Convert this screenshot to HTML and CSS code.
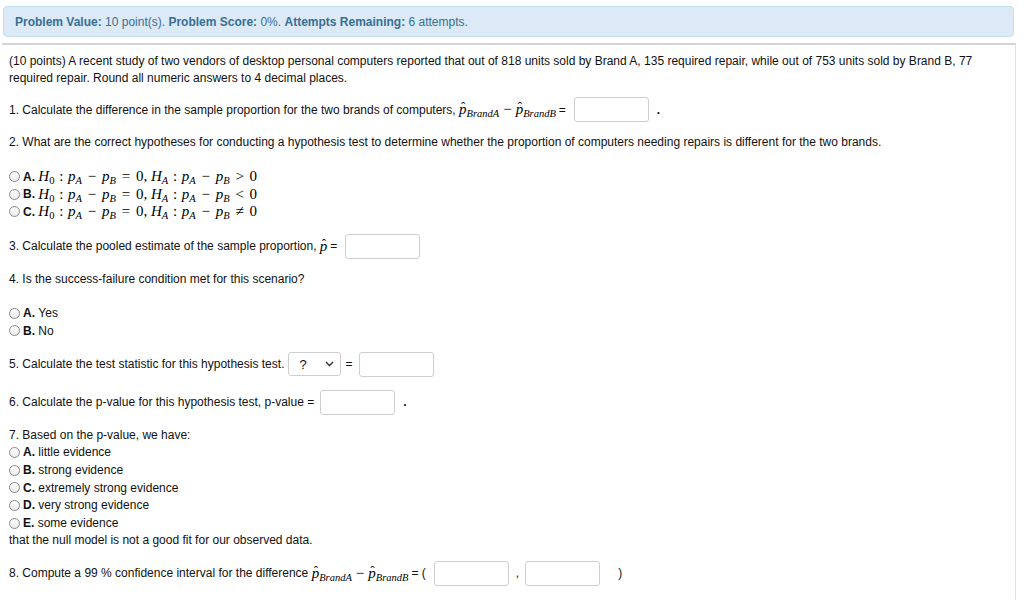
FILE: index.html
```html
<!DOCTYPE html>
<html lang="en">
<head>
<meta charset="utf-8">
<title>Problem</title>
<link rel="stylesheet" href="styles.css">
</head>
<body>
<div class="page">
  <div class="alert">
    <span class="alert-text"><b>Problem Value:</b> 10 point(s). <b>Problem Score:</b> 0%. <b>Attempts Remaining:</b> 6 attempts.</span>
  </div>
  <div class="rule"></div>
  <div class="content">
    <p class="intro">(10 points) A recent study of two vendors of desktop personal computers reported that out of 818 units sold by Brand A, 135 required repair, while out of 753 units sold by Brand B, 77 required repair. Round all numeric answers to 4 decimal places.</p>

    <div class="row m11">1. Calculate the difference in the sample proportion for the two brands of computers,&nbsp;<span class="math"><span class="hat">p</span><sub>BrandA</sub><span class="op">−</span><span class="hat">p</span><sub>BrandB</sub></span><span class="eq">=</span><span class="field"></span><span class="dot">.</span></div>

    <div class="line m12">2. What are the correct hypotheses for conducting a hypothesis test to determine whether the proportion of computers needing repairs is different for the two brands.</div>
    <div class="opts m17">
      <div class="opt"><span class="radio"></span><b>A.</b>&nbsp;<span class="math hyp"><i>H</i><sub class="n">0</sub> <span class="sp">:</span> <i>p</i><sub>A</sub> <span class="op">−</span> <i>p</i><sub>B</sub> <span class="op">=</span> 0, <i>H</i><sub>A</sub> <span class="sp">:</span> <i>p</i><sub>A</sub> <span class="op">−</span> <i>p</i><sub>B</sub> <span class="op">&gt;</span> 0</span></div>
      <div class="opt"><span class="radio"></span><b>B.</b>&nbsp;<span class="math hyp"><i>H</i><sub class="n">0</sub> <span class="sp">:</span> <i>p</i><sub>A</sub> <span class="op">−</span> <i>p</i><sub>B</sub> <span class="op">=</span> 0, <i>H</i><sub>A</sub> <span class="sp">:</span> <i>p</i><sub>A</sub> <span class="op">−</span> <i>p</i><sub>B</sub> <span class="op">&lt;</span> 0</span></div>
      <div class="opt"><span class="radio"></span><b>C.</b>&nbsp;<span class="math hyp"><i>H</i><sub class="n">0</sub> <span class="sp">:</span> <i>p</i><sub>A</sub> <span class="op">−</span> <i>p</i><sub>B</sub> <span class="op">=</span> 0, <i>H</i><sub>A</sub> <span class="sp">:</span> <i>p</i><sub>A</sub> <span class="op">−</span> <i>p</i><sub>B</sub> <span class="op">≠</span> 0</span></div>
    </div>

    <div class="row m13">3. Calculate the pooled estimate of the sample proportion,&nbsp;<span class="math"><span class="hat">p</span></span><span class="eq">=</span><span class="field"></span></div>

    <div class="line m12">4. Is the success-failure condition met for this scenario?</div>
    <div class="opts m17">
      <div class="opt"><span class="radio"></span><b>A.</b>&nbsp;Yes</div>
      <div class="opt"><span class="radio"></span><b>B.</b>&nbsp;No</div>
    </div>

    <div class="row m12">5. Calculate the test statistic for this hypothesis test.<span class="select"><span>?</span><svg width="9" height="6" viewBox="0 0 9 6"><path d="M1 1l3.5 3.5L8 1" fill="none" stroke="#333" stroke-width="1.4"/></svg></span><span class="eq eq-sel">=</span><span class="field"></span></div>

    <div class="row m13">6. Calculate the p-value for this hypothesis test, p-value =<span class="field gap"></span><span class="dot">.</span></div>

    <div class="line m12">7. Based on the p-value, we have:</div>
    <div class="opts tall">
      <div class="opt"><span class="radio"></span><b>A.</b>&nbsp;little evidence</div>
      <div class="opt"><span class="radio"></span><b>B.</b>&nbsp;strong evidence</div>
      <div class="opt"><span class="radio"></span><b>C.</b>&nbsp;extremely strong evidence</div>
      <div class="opt"><span class="radio"></span><b>D.</b>&nbsp;very strong evidence</div>
      <div class="opt"><span class="radio"></span><b>E.</b>&nbsp;some evidence</div>
    </div>
    <div class="line">that the null model is not a good fit for our observed data.</div>

    <div class="row m12">8. Compute a 99 % confidence interval for the difference&nbsp;<span class="math"><span class="hat">p</span><sub>BrandA</sub><span class="op">−</span><span class="hat">p</span><sub>BrandB</sub></span><span class="eq">= (</span><span class="field"></span><span class="comma">,</span><span class="field"></span><span class="paren">)</span></div>
  </div>
</div>
</body>
</html>
```

FILE: styles.css
```css
html, body {
  margin: 0;
  padding: 0;
  background: #fff;
}

body {
  font-family: "Liberation Sans", Arial, Helvetica, sans-serif;
  font-size: 12px;
  color: #111;
}

.page {
  width: 1016px;
  height: 600px;
}

.alert {
  margin: 6px 0 0 3px;
  width: 1011px;
  height: 31px;
  box-sizing: border-box;
  background: #dbeaf6;
  border: 1px solid #c6e0ee;
  border-radius: 4px;
  color: #3a6e92;
  padding: 1px 11px 0;
  display: flex;
  align-items: center;
}

.alert-text {
  line-height: 1;
  white-space: nowrap;
}

.rule {
  margin: 6px 0 0 2px;
  height: 2px;
  width: 1014px;
  background: #d4d4d4;
}

.content {
  border-right: 1px solid #e2e2e2;
  padding: 0 0 0 9px;
  height: 555px;
  box-sizing: border-box;
}

.intro {
  margin: 0;
  padding-top: 8px;
  line-height: 17px;
  width: 970px;
}

.line {
  line-height: 17px;
  height: 17px;
}

.row {
  display: flex;
  align-items: center;
  height: 25px;
  white-space: nowrap;
}

.m11 { margin-top: 10px; }
.m12 { margin-top: 12px; }
.m13 { margin-top: 13px; }
.m17 { margin-top: 17px; }

.opts .opt {
  height: 17.5px;
  display: flex;
  align-items: center;
  white-space: nowrap;
}

.opts.tall .opt {
  height: 17.7px;
}

.radio {
  width: 11px;
  height: 11px;
  box-sizing: border-box;
  border: 1px solid #8a8a8a;
  border-radius: 50%;
  background: linear-gradient(#fdfdfd, #ececec);
  margin: 0 3px 0 0;
  flex: none;
}

/* math notation */
.math {
  font-family: "Liberation Serif", "Times New Roman", serif;
  font-size: 15px;
  white-space: nowrap;
  color: #000;
}

.math i {
  font-style: italic;
}

.math .op {
  font-style: normal;
  padding: 0 4px;
}

.math.hyp .op {
  padding: 0 2px;
}

.math sub {
  font-size: 10.5px;
  font-style: italic;
  vertical-align: -3px;
  line-height: 0;
}

.math sub.n {
  font-style: normal;
}

.math .sp {
  padding: 0 1px;
}

.hat {
  font-style: italic;
  position: relative;
  display: inline-block;
}

.hat::after {
  content: "ˆ";
  position: absolute;
  left: 2px;
  top: -2px;
  font-style: normal;
  font-size: 13px;
}

.eq {
  margin: 0 8px 0 3px;
}

.eq-sel {
  margin: 0 7px 0 4px;
}

.field {
  display: inline-block;
  width: 75px;
  height: 25px;
  box-sizing: border-box;
  border: 1px solid #cfcfcf;
  border-radius: 3px;
  background: #fff;
  flex: none;
}

.field.gap {
  margin-left: 6px;
}

.dot {
  margin-left: 8px;
  font-weight: bold;
}

.comma {
  margin: 0 6px 0 7px;
}

.paren {
  margin-left: 18px;
}

.select {
  margin-left: 4px;
  width: 53px;
  height: 24px;
  box-sizing: border-box;
  border: 1px solid #cfcfcf;
  border-radius: 3px;
  display: inline-flex;
  align-items: center;
  justify-content: space-between;
  padding: 0 6px 0 10px;
  font-size: 13px;
  flex: none;
}
```
